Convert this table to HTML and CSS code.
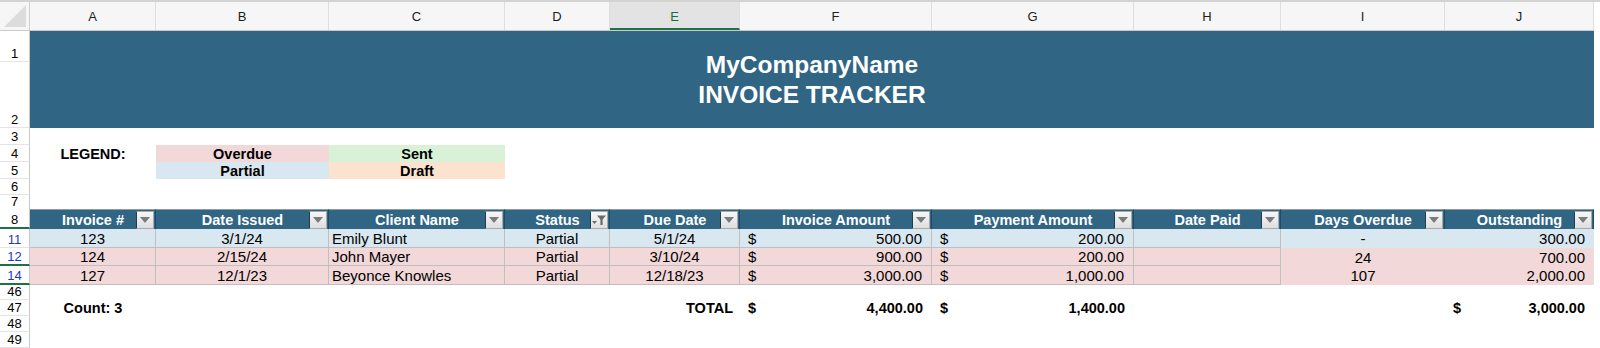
FILE: index.html
```html
<!DOCTYPE html>
<html>
<head>
<meta charset="utf-8">
<link rel="stylesheet" href="styles.css">
</head>
<body>
<div class="sheet">
  <div class="row colhead">
    <div class="corner"><svg width="24" height="24" viewBox="0 0 24 24"><path d="M1 23L23 1V23Z" fill="#dcdcdc"/></svg></div>
    <div class="ch">A</div>
    <div class="ch">B</div>
    <div class="ch">C</div>
    <div class="ch">D</div>
    <div class="ch sel">E</div>
    <div class="ch">F</div>
    <div class="ch">G</div>
    <div class="ch">H</div>
    <div class="ch">I</div>
    <div class="ch">J</div>
  </div>

  <div class="banner-block">
    <div class="rh b1">1</div>
    <div class="rh b2">2</div>
    <div class="banner">
      <div class="t-line">MyCompanyName</div>
      <div class="t-line">INVOICE TRACKER</div>
    </div>
  </div>

  <div class="row h17"><div class="rh">3</div></div>
  <div class="row h17">
    <div class="rh">4</div>
    <div class="cell bold center">LEGEND:</div>
    <div class="cell bold center lg overdue">Overdue</div>
    <div class="cell bold center lg sent">Sent</div>
  </div>
  <div class="row h17">
    <div class="rh">5</div>
    <div class="cell"></div>
    <div class="cell bold center lg partial">Partial</div>
    <div class="cell bold center lg draft">Draft</div>
  </div>
  <div class="row h16"><div class="rh">6</div></div>
  <div class="row h14"><div class="rh">7</div></div>

  <div class="row thead">
    <div class="rh green">8</div>
    <div class="th"><span class="lbl">Invoice #</span><span class="fbtn"><svg width="10" height="6" viewBox="0 0 10 6"><path d="M0 0H10L5 6Z" fill="#7b7b7b"/></svg></span></div>
    <div class="th"><span class="lbl">Date Issued</span><span class="fbtn"><svg width="10" height="6" viewBox="0 0 10 6"><path d="M0 0H10L5 6Z" fill="#7b7b7b"/></svg></span></div>
    <div class="th"><span class="lbl">Client Name</span><span class="fbtn"><svg width="10" height="6" viewBox="0 0 10 6"><path d="M0 0H10L5 6Z" fill="#7b7b7b"/></svg></span></div>
    <div class="th"><span class="lbl">Status</span><span class="fbtn"><svg width="14" height="12" viewBox="0 0 14 12"><path d="M0 7H5L2.5 10Z" fill="#6a6a6a"/><path d="M5 1.5H14L10.6 5.5V11L8.4 11V5.5Z" fill="#6a6a6a"/></svg></span></div>
    <div class="th"><span class="lbl">Due Date</span><span class="fbtn"><svg width="10" height="6" viewBox="0 0 10 6"><path d="M0 0H10L5 6Z" fill="#7b7b7b"/></svg></span></div>
    <div class="th"><span class="lbl">Invoice Amount</span><span class="fbtn"><svg width="10" height="6" viewBox="0 0 10 6"><path d="M0 0H10L5 6Z" fill="#7b7b7b"/></svg></span></div>
    <div class="th"><span class="lbl">Payment Amount</span><span class="fbtn"><svg width="10" height="6" viewBox="0 0 10 6"><path d="M0 0H10L5 6Z" fill="#7b7b7b"/></svg></span></div>
    <div class="th"><span class="lbl">Date Paid</span><span class="fbtn"><svg width="10" height="6" viewBox="0 0 10 6"><path d="M0 0H10L5 6Z" fill="#7b7b7b"/></svg></span></div>
    <div class="th"><span class="lbl">Days Overdue</span><span class="fbtn"><svg width="10" height="6" viewBox="0 0 10 6"><path d="M0 0H10L5 6Z" fill="#7b7b7b"/></svg></span></div>
    <div class="th"><span class="lbl">Outstanding</span><span class="fbtn"><svg width="10" height="6" viewBox="0 0 10 6"><path d="M0 0H10L5 6Z" fill="#7b7b7b"/></svg></span></div>
  </div>

  <div class="row body h19 blue">
    <div class="rh link">11</div>
    <div class="td center">123</div>
    <div class="td center">3/1/24</div>
    <div class="td left">Emily Blunt</div>
    <div class="td center">Partial</div>
    <div class="td center">5/1/24</div>
    <div class="td amt"><span>$</span><span>500.00</span></div>
    <div class="td amt"><span>$</span><span>200.00</span></div>
    <div class="td"></div>
    <div class="td nb center">-</div>
    <div class="td nb right">300.00</div>
  </div>
  <div class="row body h18 pink">
    <div class="rh link green">12</div>
    <div class="td center">124</div>
    <div class="td center">2/15/24</div>
    <div class="td left">John Mayer</div>
    <div class="td center">Partial</div>
    <div class="td center">3/10/24</div>
    <div class="td amt"><span>$</span><span>900.00</span></div>
    <div class="td amt"><span>$</span><span>200.00</span></div>
    <div class="td"></div>
    <div class="td nb center">24</div>
    <div class="td nb right">700.00</div>
  </div>
  <div class="row body h19 pink">
    <div class="rh link green">14</div>
    <div class="td center">127</div>
    <div class="td center">12/1/23</div>
    <div class="td left">Beyonce Knowles</div>
    <div class="td center">Partial</div>
    <div class="td center">12/18/23</div>
    <div class="td amt"><span>$</span><span>3,000.00</span></div>
    <div class="td amt"><span>$</span><span>1,000.00</span></div>
    <div class="td"></div>
    <div class="td nb center">107</div>
    <div class="td nb right">2,000.00</div>
  </div>

  <div class="row h15"><div class="rh">46</div></div>
  <div class="row h16 totals">
    <div class="rh">47</div>
    <div class="cell bold center">Count: 3</div>
    <div class="cell"></div>
    <div class="cell"></div>
    <div class="cell"></div>
    <div class="cell bold right tot">TOTAL</div>
    <div class="cell bold amt"><span>$</span><span>4,400.00</span></div>
    <div class="cell bold amt"><span>$</span><span>1,400.00</span></div>
    <div class="cell"></div>
    <div class="cell"></div>
    <div class="cell bold amt"><span>$</span><span>3,000.00</span></div>
  </div>
  <div class="row h16"><div class="rh">48</div></div>
  <div class="row h16"><div class="rh">49</div></div>
</div>
</body>
</html>
```

FILE: styles.css
```css
:root {
  --cols: 30px 126px 173px 176px 105px 130px 192px 202px 147px 164px 149px;
  --navy: #306584;
  --blue-row: #d9e7f0;
  --pink-row: #f2d8d9;
  --grid: #bfbfbf;
}

* {
  box-sizing: border-box;
  margin: 0;
  padding: 0;
}

body {
  margin: 0;
  width: 1600px;
  height: 348px;
  overflow: hidden;
  background: #ffffff;
  font-family: "Liberation Sans", Arial, Helvetica, sans-serif;
  font-size: 14.5px;
  color: #000;
}

.sheet {
  width: 1600px;
  border-top: 2px solid #d3d3d3;
}

.row {
  display: grid;
  grid-template-columns: var(--cols);
}

.h14 { height: 14px; }
.h15 { height: 15px; }
.h16 { height: 16px; }
.h17 { height: 17px; }
.h18 { height: 18px; }
.h19 { height: 19px; }

/* column header row */
.colhead {
  height: 29px;
  width: 1594px;
  background: #f6f6f6;
  border-bottom: 1px solid #c9c9c9;
  border-right: 1px solid #d6d6d6;
}

.corner {
  border-right: 1px solid #d0d0d0;
  display: flex;
  align-items: flex-end;
  justify-content: flex-end;
  padding: 0 2px 2px 0;
}

.ch {
  display: flex;
  align-items: center;
  justify-content: center;
  font-size: 13px;
  color: #1c1c1c;
  border-right: 1px solid #dedede;
}

.ch.sel {
  background: #e3e3e3;
  color: #1d6b3c;
  border-bottom: 2px solid #217346;
  padding-top: 2px;
}

/* row header */
.rh {
  display: flex;
  align-items: flex-end;
  justify-content: center;
  font-size: 13px;
  line-height: 13px;
  padding-bottom: 1px;
  color: #000;
  background: #fff;
  border-right: 1px solid #c8c8c8;
  border-bottom: 1px solid #e4e4e4;
}

.rh.link { color: #1a35d6; }
.rh.green { border-bottom: 2px solid #1e7145; }

/* banner */
.banner-block {
  display: grid;
  grid-template-columns: 30px 1564px;
  grid-template-rows: 31px 66px;
}

.b1 { grid-column: 1; grid-row: 1; }
.b2 { grid-column: 1; grid-row: 2; }

.banner {
  grid-column: 2;
  grid-row: 1 / 3;
  background: var(--navy);
  color: #fff;
  font-weight: bold;
  font-size: 24.5px;
  line-height: 30px;
  display: flex;
  flex-direction: column;
  align-items: center;
  justify-content: center;
}

/* generic cells */
.cell {
  display: flex;
  align-items: center;
  line-height: 16px;
  white-space: nowrap;
}

.bold { font-weight: bold; }
.center { justify-content: center; }
.left { justify-content: flex-start; padding-left: 3px; }
.right { justify-content: flex-end; padding-right: 9px; }
.tot { padding-right: 7px; }

.lg.overdue { background: var(--pink-row); }
.lg.sent { background: #d9f1d7; }
.lg.partial { background: var(--blue-row); }
.lg.draft { background: #fbe3d0; }

/* table header */
.thead {
  height: 20px;
}

.th {
  background: var(--navy);
  color: #fff;
  font-weight: bold;
  display: flex;
  align-items: center;
  padding-left: 20px;
  padding-right: 1px;
  border-top: 1px solid #8a9cab;
  border-right: 1px solid #1f4b66;
  white-space: nowrap;
}

.th .lbl {
  flex: 1;
  text-align: center;
}

.fbtn {
  width: 18px;
  height: 18px;
  background: linear-gradient(#f7f7f7, #dedede);
  border: 1px solid #a9a9a9;
  border-left-color: #1c3f55;
  display: flex;
  align-items: center;
  justify-content: center;
  flex: none;
}

/* body rows */
.td {
  display: flex;
  align-items: center;
  white-space: nowrap;
  font-size: 15px;
  border-right: 1px solid var(--grid);
  border-bottom: 1px solid var(--grid);
}

.td.nb {
  border: none;
}

.blue .td { background: var(--blue-row); }
.pink .td { background: var(--pink-row); }

.amt {
  display: flex;
  justify-content: space-between;
  padding-left: 8px;
  padding-right: 9px;
}
```
